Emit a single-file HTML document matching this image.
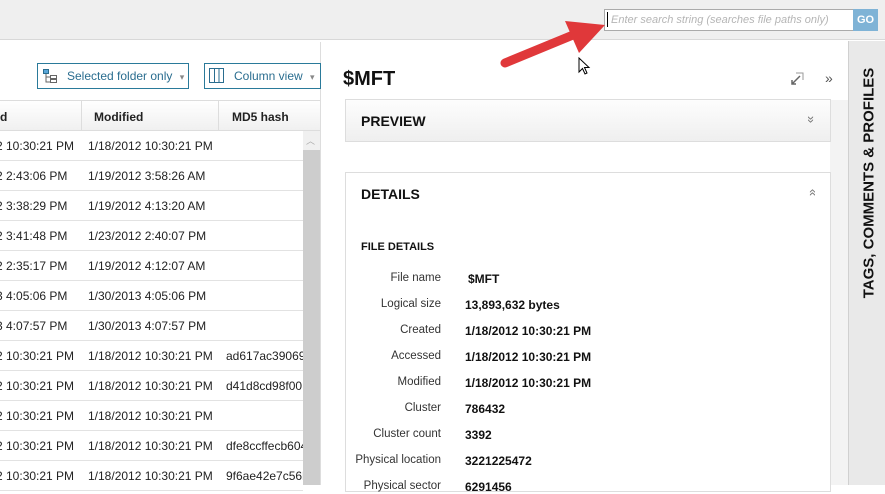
<!DOCTYPE html>
<html><head><meta charset="utf-8"><style>
*{margin:0;padding:0;box-sizing:border-box}
body{width:885px;height:485px;overflow:hidden;background:#fff;font-family:"Liberation Sans",sans-serif;font-size:12px;color:#222;position:relative}
.a{position:absolute}
.top{left:0;top:0;width:885px;height:40px;background:#efefef;border-bottom:1px solid #d8d8d8}
.btn{border:1px solid #2a7a9a;height:26px;top:63px;color:#2a6d8f;font-size:12px;line-height:24px;background:#fff}
.row{left:0;width:303px;height:30px;border-bottom:1px solid #e2e2e2}
.row span{position:absolute;top:8px;white-space:nowrap}
.lbl{width:110px;text-align:right;left:331px;color:#333;font-size:11.5px}
.val{left:465px;font-weight:bold;color:#111}
.chev{transform:rotate(90deg);font-size:13px;color:#777}
</style></head><body>
<div class="a top"></div>
<div class="a" style="left:604px;top:9px;width:250px;height:22px;background:#fff;border:1px solid #aaa;font-style:italic;color:#b5b5b5;font-size:11px;line-height:20px;padding-left:6px;white-space:nowrap;overflow:hidden">Enter search string (searches file paths only)</div>
<div class="a" style="left:607px;top:12px;width:1px;height:15px;background:#000"></div>
<div class="a" style="left:853px;top:9px;width:25px;height:22px;background:#7fb3d6;color:#fff;font-weight:bold;font-size:11px;line-height:22px;text-align:center">GO</div>
<svg class="a" style="left:495px;top:15px" width="120" height="60"><path d="M10 48 L78 20" stroke="#e0383a" stroke-width="9" stroke-linecap="round"/><path d="M110 10 L70 6 L84 38 Z" fill="#e0383a"/></svg>
<svg class="a" style="left:578px;top:57px" width="14" height="20"><path d="M1 1 L1 15 L4.5 11.5 L7 17 L9 16 L6.5 10.5 L11 10.5 Z" fill="#fff" stroke="#000" stroke-width="1"/></svg>
<div class="a" style="left:320px;top:42px;width:1px;height:443px;background:#ddd"></div>
<div class="a btn" style="left:37px;width:152px;padding-left:29px">Selected folder only <span style="color:#888;margin-left:4px;font-size:9px">▾</span></div>
<svg class="a" style="left:43px;top:69px" width="16" height="15"><rect x="0.5" y="0.5" width="5" height="4" fill="#5aa6d8" stroke="#2a6d8f"/><path d="M3 5v8h4M3 8h4" stroke="#666" fill="none"/><rect x="7.5" y="6.5" width="6" height="3" fill="none" stroke="#666"/><rect x="7.5" y="10.5" width="6" height="3" fill="none" stroke="#666"/></svg>
<div class="a btn" style="left:204px;width:117px;padding-left:29px">Column view <span style="color:#888;margin-left:4px;font-size:9px">▾</span></div>
<svg class="a" style="left:209px;top:68px" width="16" height="16"><rect x="0.5" y="0.5" width="14" height="14" fill="none" stroke="#2a6d8f"/><path d="M5.5 0v15M10 0v15" stroke="#2a6d8f"/></svg>
<div class="a" style="left:0;top:100px;width:320px;height:31px;background:linear-gradient(#fff,#f0f0f0);border-top:1px solid #ddd;border-bottom:1px solid #ddd;font-weight:bold;font-size:12px">
<span class="a" style="left:0;top:9px">d</span>
<div class="a" style="left:81px;top:0;width:1px;height:30px;background:#ddd"></div>
<span class="a" style="left:94px;top:9px">Modified</span>
<div class="a" style="left:218px;top:0;width:1px;height:30px;background:#ddd"></div>
<span class="a" style="left:232px;top:9px">MD5 hash</span></div>
<div class="a" style="left:303px;top:131px;width:17px;height:354px;background:#f0f0f0"></div>
<div class="a" style="left:303px;top:150px;width:17px;height:335px;background:#cdcdcd"></div>
<div class="a" style="left:306px;top:134px;color:#aaa;font-size:9px">︿</div>
<div class="a" style="left:0;top:131px;width:303px">
<div class="row a" style="top:0"><span style="left:-4px">2 10:30:21 PM</span><span style="left:88px">1/18/2012 10:30:21 PM</span></div>
<div class="row a" style="top:30px"><span style="left:-4px">2 2:43:06 PM</span><span style="left:88px">1/19/2012 3:58:26 AM</span></div>
<div class="row a" style="top:60px"><span style="left:-4px">2 3:38:29 PM</span><span style="left:88px">1/19/2012 4:13:20 AM</span></div>
<div class="row a" style="top:90px"><span style="left:-4px">2 3:41:48 PM</span><span style="left:88px">1/23/2012 2:40:07 PM</span></div>
<div class="row a" style="top:120px"><span style="left:-4px">2 2:35:17 PM</span><span style="left:88px">1/19/2012 4:12:07 AM</span></div>
<div class="row a" style="top:150px"><span style="left:-4px">3 4:05:06 PM</span><span style="left:88px">1/30/2013 4:05:06 PM</span></div>
<div class="row a" style="top:180px"><span style="left:-4px">3 4:07:57 PM</span><span style="left:88px">1/30/2013 4:07:57 PM</span></div>
<div class="row a" style="top:210px;overflow:hidden"><span style="left:-4px">2 10:30:21 PM</span><span style="left:88px">1/18/2012 10:30:21 PM</span><span style="left:226px">ad617ac39069</span></div>
<div class="row a" style="top:240px;overflow:hidden"><span style="left:-4px">2 10:30:21 PM</span><span style="left:88px">1/18/2012 10:30:21 PM</span><span style="left:226px">d41d8cd98f00</span></div>
<div class="row a" style="top:270px"><span style="left:-4px">2 10:30:21 PM</span><span style="left:88px">1/18/2012 10:30:21 PM</span></div>
<div class="row a" style="top:300px;overflow:hidden"><span style="left:-4px">2 10:30:21 PM</span><span style="left:88px">1/18/2012 10:30:21 PM</span><span style="left:226px">dfe8ccffecb604</span></div>
<div class="row a" style="top:330px;overflow:hidden"><span style="left:-4px">2 10:30:21 PM</span><span style="left:88px">1/18/2012 10:30:21 PM</span><span style="left:226px">9f6ae42e7c56b</span></div>
</div>
<div class="a" style="left:343px;top:68px;font-size:20px;font-weight:bold;color:#111">$MFT</div>
<svg class="a" style="left:790px;top:72px" width="14" height="14"><path d="M6 1h7v7" fill="none" stroke="#999"/><path d="M10 4L2 12M2 8v4h4" fill="none" stroke="#666" stroke-width="1.5"/></svg>
<div class="a" style="left:825px;top:70px;font-size:14px;color:#555">»</div>
<div class="a" style="left:830px;top:100px;width:18px;height:385px;background:#f3f3f3"></div>
<div class="a" style="left:345px;top:99px;width:486px;height:43px;border:1px solid #ddd;background:linear-gradient(#fdfdfd,#efefef)"></div>
<div class="a" style="left:361px;top:113px;font-weight:bold;font-size:14px;color:#111">PREVIEW</div>
<div class="a chev" style="left:808px;top:112px">»</div>
<div class="a" style="left:345px;top:172px;width:486px;height:320px;border:1px solid #ddd;background:#fff"></div>
<div class="a" style="left:361px;top:186px;font-weight:bold;font-size:14px;color:#111">DETAILS</div>
<div class="a chev" style="left:808px;top:185px;transform:rotate(-90deg)">»</div>
<div class="a" style="left:361px;top:241px;font-weight:bold;font-size:11px;color:#111">FILE DETAILS</div>
<div class="a lbl" style="top:272px">File name</div><div class="a val" style="top:272px;left:468px">$MFT</div>
<div class="a lbl" style="top:298px">Logical size</div><div class="a val" style="top:298px">13,893,632 bytes</div>
<div class="a lbl" style="top:324px">Created</div><div class="a val" style="top:324px">1/18/2012 10:30:21 PM</div>
<div class="a lbl" style="top:350px">Accessed</div><div class="a val" style="top:350px">1/18/2012 10:30:21 PM</div>
<div class="a lbl" style="top:376px">Modified</div><div class="a val" style="top:376px">1/18/2012 10:30:21 PM</div>
<div class="a lbl" style="top:402px">Cluster</div><div class="a val" style="top:402px">786432</div>
<div class="a lbl" style="top:428px">Cluster count</div><div class="a val" style="top:428px">3392</div>
<div class="a lbl" style="top:454px">Physical location</div><div class="a val" style="top:454px">3221225472</div>
<div class="a lbl" style="top:480px">Physical sector</div><div class="a val" style="top:480px">6291456</div>
<div class="a" style="left:848px;top:41px;width:37px;height:444px;background:#e9e9e9;border-left:1px solid #d0d0d0"></div>
<div class="a" style="left:869px;top:183px;transform:translate(-50%,-50%) rotate(-90deg);white-space:nowrap;font-weight:bold;font-size:15px;color:#111">TAGS, COMMENTS &amp; PROFILES</div>
</body></html>
